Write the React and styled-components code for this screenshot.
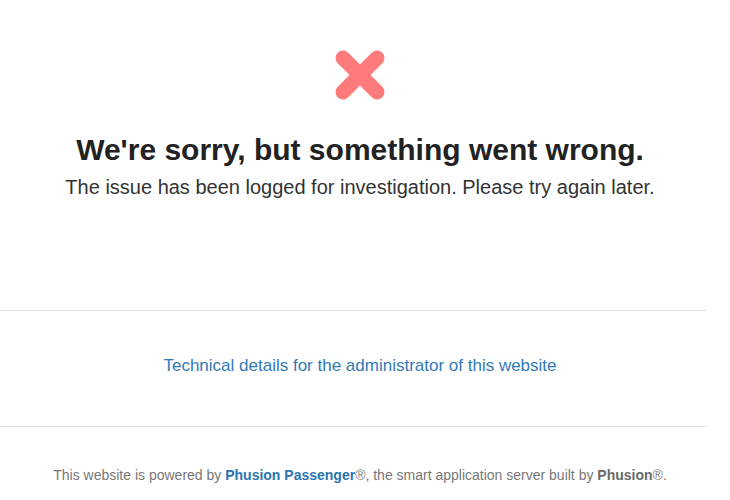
import React from 'react';
import styled, { createGlobalStyle } from 'styled-components';

const GlobalStyle = createGlobalStyle`
  html, body {
    margin: 0;
    padding: 0;
    background: #fff;
  }
  body {
    font-family: "Liberation Sans", Arial, sans-serif;
  }
`;

const Page = styled.div`
  width: 720px;
  display: flex;
  flex-direction: column;
  align-items: center;
`;

const Hero = styled.section`
  display: flex;
  flex-direction: column;
  align-items: center;
  padding-top: 50px;
  height: 310px;
  box-sizing: border-box;
  width: 100%;
`;

const Title = styled.h1`
  margin: 32px 0 0;
  font-size: 30px;
  font-weight: bold;
  color: #222;
  line-height: 1.2;
`;

const Lead = styled.p`
  margin: 7px 0 0;
  font-size: 20px;
  color: #333;
  line-height: 1.2;
`;

const Divider = styled.hr`
  align-self: flex-start;
  width: 707px;
  margin: 0;
  border: 0;
  border-top: 1px solid #e3e3e3;
`;

const Details = styled.div`
  height: 115px;
  padding-bottom: 6px;
  box-sizing: border-box;
  display: flex;
  align-items: center;
  justify-content: center;
  width: 100%;
`;

const DetailsLink = styled.a`
  font-size: 17px;
  color: #337ab7;
  text-decoration: none;
`;

const Footer = styled.footer`
  padding-top: 40px;
  font-size: 14px;
  color: #777;
`;

const Brand = styled.strong`
  color: ${(p) => (p.link ? '#2a74b0' : '#6a6a6a')};
`;

const ErrorIcon = () => (
  <svg width="50" height="50" viewBox="0 0 50 50">
    <g stroke="#ff7b7b" strokeWidth="15" strokeLinecap="round">
      <line x1="8" y1="8" x2="42" y2="42" />
      <line x1="42" y1="8" x2="8" y2="42" />
    </g>
  </svg>
);

const App = () => {
  return (
    <>
      <GlobalStyle />
      <Page>
        <Hero>
          <ErrorIcon />
          <Title>We're sorry, but something went wrong.</Title>
          <Lead>The issue has been logged for investigation. Please try again later.</Lead>
        </Hero>
        <Divider />
        <Details>
          <DetailsLink href="#">Technical details for the administrator of this website</DetailsLink>
        </Details>
        <Divider />
        <Footer>
          This website is powered by <Brand link>Phusion Passenger</Brand>®, the smart application server built by <Brand>Phusion</Brand>®.
        </Footer>
      </Page>
    </>
  );
};

export default App;
